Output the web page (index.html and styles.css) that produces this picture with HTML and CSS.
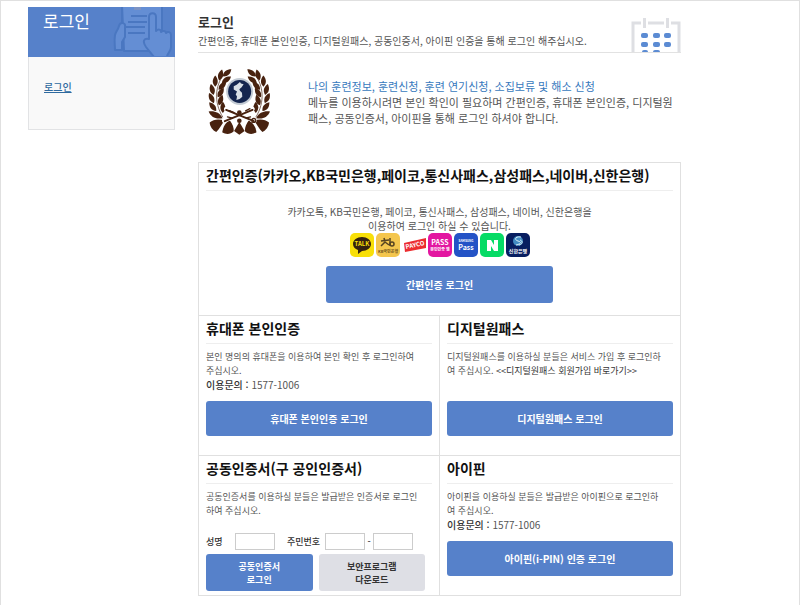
FILE: index.html
```html
<!DOCTYPE html>
<html lang="ko">
<head>
	<meta charset="utf-8">
	<title>로그인</title>
	<link rel="stylesheet" href="styles.css">
</head>
<body>
	<div class="page">
		<aside class="side">
			<div class="side-head">
				<h2>로그인</h2>
				<svg class="side-pic" viewBox="0 0 60 49" aria-hidden="true">
					<g fill="#648ed4" stroke="#4a77c1" stroke-width="2" stroke-linejoin="round">
						<path d="M10 -2v20M10 -2H50V44H12z"/>
						<path d="M3 43c0-5-1-9 0-15 1-4 3-5 4-9 1-4 7-4 6 1v10l-3 5v8z"/>
						<path d="M22 -2h7v5h-7z" fill="#7c93c4" stroke="none"/>
						<path d="M19 9h16M16 15h19M13 20h20M16 26h17" fill="none"/>
						<path d="M42 50l-8-10c-4-6-2-9 3-8V10c0-5 7-5 7 0v14c2-2 5-2 5 1 2-2 5-1 5 1 2-2 5-1 5 2v12c0 5-4 6-4 10z"/>
					</g>
				</svg>
			</div>
			<nav class="side-body"><a href="#">로그인</a></nav>
		</aside>

		<main>
			<header class="title">
				<div>
					<h1>로그인</h1>
					<p>간편인증, 휴대폰 본인인증, 디지털원패스, 공동인증서, 아이핀 인증을 통해 로그인 해주십시오.</p>
				</div>
				<svg class="calendar" viewBox="0 0 50 35" aria-hidden="true">
					<path d="M2 36V6H48V36" fill="none" stroke="#dedfe3" stroke-width="3"/>
					<path d="M10 0h7v11h-7zM33 0h7v11h-7z" fill="#fff"/>
					<path d="M12 1h3v10h-3zM35 1h3v10h-3z" fill="#dedfe3"/>
					<g fill="#5b8bd3">
						<rect x="10" y="16" width="7" height="5" rx="2"/><rect x="22" y="16" width="7" height="5" rx="2"/><rect x="33" y="16" width="7" height="5" rx="2"/>
						<rect x="10" y="25" width="7" height="5" rx="2"/><rect x="22" y="25" width="7" height="5" rx="2"/><rect x="33" y="25" width="7" height="5" rx="2"/>
						<rect x="11" y="33" width="6" height="4" rx="2"/><rect x="22" y="33" width="7" height="4" rx="2"/>
					</g>
				</svg>
			</header>

			<section class="info">
				<svg class="emblem" viewBox="39 24 188 204" role="img" aria-label="예비군">
					<defs>
						<path id="leaf" d="M0 16C-11 5-9-7 0-18 9-7 11 5 0 16z"/>
						<g id="branch" fill="#48220f">
							<path d="M86 44C62 75 55 125 84 172" fill="none" stroke="#48220f" stroke-width="2"/>
							<use href="#leaf" transform="translate(96 38) rotate(50)"/>
							<use href="#leaf" transform="translate(77 45) rotate(15)"/>
							<use href="#leaf" transform="translate(94 59) rotate(55)"/>
							<use href="#leaf" transform="translate(61 64) rotate(0)"/>
							<use href="#leaf" transform="translate(82 77) rotate(43)"/>
							<use href="#leaf" transform="translate(52 89) rotate(-14)"/>
							<use href="#leaf" transform="translate(77 98) rotate(32)"/>
							<use href="#leaf" transform="translate(50 115) rotate(-25)"/>
							<use href="#leaf" transform="translate(77 121) rotate(18)"/>
							<use href="#leaf" transform="translate(54 141) rotate(-38)"/>
							<use href="#leaf" transform="translate(84 143) rotate(0)"/>
							<path d="M41 155c15-3 34 2 42 20-20 5-36-4-42-20z"/>
							<path d="M44 188c12-10 29-12 45-5-8 9-15 26-25 34-11-5-19-17-20-29z"/>
							<path d="M82 218c3-17 9-29 23-37 8 10 13 23 12 34-10 9-22 11-35 3z"/>
						</g>
					</defs>
					<use href="#branch"/>
					<use href="#branch" transform="translate(268 0) scale(-1 1)"/>
					<path d="M118 214l16-27 16 27-16 11z" fill="#48220f"/>
					<g fill="none" stroke-linecap="round">
						<path d="M88 183l86-36M180 183L94 147" stroke="#fff" stroke-width="13"/>
						<path d="M90 184l84-34M178 184L94 150" stroke="#48220f" stroke-width="6"/>
						<path d="M98 171l15 4M104 152l14 6M153 153l13-7M155 174l13-3" stroke="#48220f" stroke-width="4"/>
						<circle cx="178" cy="182" r="6" stroke="#48220f" stroke-width="4"/>
					</g>
					<circle cx="134" cy="158" r="7" fill="#48220f"/>
					<circle cx="134" cy="183" r="7" fill="#48220f"/>
					<circle cx="135" cy="94" r="41" fill="#c3cbd4"/>
					<circle cx="135" cy="94" r="35" fill="#14254f"/>
					<path d="M117 78l9-4 10-9 3 5 8 2-6 9-7 6 2 5 6 6 1 12-8 7-10 3 2-11-4-6 4-9-10-6z" fill="#d8dfe6"/>
				</svg>
				<p><em>나의 훈련정보, 훈련신청, 훈련 연기신청, 소집보류 및 해소 신청</em><br>
				메뉴를 이용하시려면 본인 확인이 필요하며 간편인증, 휴대폰 본인인증, 디지털원<br>패스, 공동인증서, 아이핀을 통해 로그인 하셔야 합니다.</p>
			</section>

			<div class="panel">
				<section class="card simple">
					<h3>간편인증(카카오,KB국민은행,페이코,통신사패스,삼성패스,네이버,신한은행)</h3>
					<p>카카오톡, KB국민은행, 페이코, 통신사패스, 삼성패스, 네이버, 신한은행을<br>이용하여 로그인 하실 수 있습니다.</p>
					<div class="logos">
						<svg viewBox="0 0 24 24">
							<rect width="24" height="24" rx="5" fill="#f8df08"/>
							<path d="M12 4c5 0 9 3 9 7s-4 7-9 7l-4 3 0-4c-3-1-5-3-5-6 0-4 4-7 9-7z" fill="#35220f"/>
							<text x="12" y="13" font-size="6" fill="#f8df08">TALK</text>
						</svg>
						<svg viewBox="0 0 24 24">
							<rect width="24" height="24" rx="5" fill="#f4c64e"/>
							<path d="M5 8l8-1M8 5l1 4-4 4M9 9l4 3M14 5v8" fill="none" stroke="#564322" stroke-width="1.5"/>
							<circle cx="16" cy="11" r="2" fill="none" stroke="#564322" stroke-width="1.5"/>
							<text x="12" y="20" font-size="4" fill="#705522">KB국민은행</text>
						</svg>
						<svg viewBox="0 0 24 24">
							<path d="M2 10L24 5V15L3 19z" fill="#ec2c2f"/>
							<text x="13" y="14" font-size="6" fill="#fff" transform="rotate(-12 13 12)">PAYCO</text>
						</svg>
						<svg viewBox="0 0 24 24">
							<rect width="24" height="24" rx="5" fill="#e316a0"/>
							<text x="12" y="12" font-size="7" fill="#fff">PASS</text>
							<text x="12" y="18" font-size="4" fill="#fff">본인인증 앱</text>
						</svg>
						<svg viewBox="0 0 24 24">
							<rect width="24" height="24" rx="5" fill="#2453c6"/>
							<text x="12" y="9" font-size="3" fill="#fff">SAMSUNG</text>
							<text x="12" y="17" font-size="7" fill="#fff">Pass</text>
						</svg>
						<svg viewBox="0 0 24 24">
							<rect width="24" height="24" rx="5" fill="#06db65"/>
							<path d="M7 18V7h4l3 5V7h4v11h-4l-3-5v5z" fill="#fff"/>
						</svg>
						<svg viewBox="0 0 24 24">
							<rect width="24" height="24" rx="5" fill="#081e60"/>
							<circle cx="12" cy="8" r="5" fill="#438cc3"/>
							<path d="M15 4c-6-1-7 3-3 4s3 3-2 4M13 12c4-1 4-4 1-5" fill="none" stroke="#d9edf5"/>
							<text x="12" y="20" font-size="5" fill="#fff">신한은행</text>
						</svg>
					</div>
					<button type="button" class="btn">간편인증 로그인</button>
				</section>

				<section class="card">
					<h3>휴대폰 본인인증</h3>
					<p>본인 명의의 휴대폰을 이용하여 본인 확인 후 로그인하여<br>주십시오.<br><span class="tel"><b>이용문의 :</b> 1577-1006</span></p>
					<button type="button" class="btn">휴대폰 본인인증 로그인</button>
				</section>

				<section class="card">
					<h3>디지털원패스</h3>
					<p>디지털원패스를 이용하실 분들은 서비스 가입 후 로그인하<br>여 주십시오. <a href="#">&lt;&lt;디지털원패스 회원가입 바로가기&gt;&gt;</a></p>
					<button type="button" class="btn">디지털원패스 로그인</button>
				</section>

				<section class="card">
					<h3>공동인증서(구 공인인증서)</h3>
					<p>공동인증서를 이용하실 분들은 발급받은 인증서로 로그인<br>하여 주십시오.</p>
					<form class="cert">
						<div class="fields">
							<label class="name" for="name">성명</label>
							<input type="text" id="name">
							<label class="jumin" for="jumin1">주민번호</label>
							<input type="text" id="jumin1">
							<span>-</span>
							<input type="password" id="jumin2" aria-label="주민번호 뒷자리">
						</div>
						<div class="btns">
							<button type="button" class="btn">공동인증서<br>로그인</button>
							<button type="button" class="btn gray">보안프로그램<br>다운로드</button>
						</div>
					</form>
				</section>

				<section class="card">
					<h3>아이핀</h3>
					<p>아이핀을 이용하실 분들은 발급받은 아이핀으로 로그인하<br>여 주십시오.<br><span class="tel"><b>이용문의 :</b> 1577-1006</span></p>
					<button type="button" class="btn">아이핀(i-PIN) 인증 로그인</button>
				</section>
			</div>
		</main>
	</div>
</body>
</html>
```
FILE: styles.css
```css
* {
	box-sizing: border-box;
}

html {
	height: 100%;
}

body {
	margin: 0;
	min-height: 100%;
	border: 1px solid #e0e0e0;
	background: #fff;
	color: #555;
	font-family: "Noto Sans CJK KR", sans-serif;
	font-size: 10px;
	line-height: 14px;
}

h1, h2, h3, p {
	margin: 0;
}

.page {
	display: grid;
	grid-template-columns: 147px 1fr;
	gap: 23px;
	align-items: start;
	padding: 6px 118px 9px 27px;
}

/* left menu */
.side-head {
	display: flex;
	justify-content: space-between;
	height: 50px;
	padding: 0 3px 0 15px;
	background: #5681ca;
	color: #fff;
}

.side-head h2 {
	padding-top: 2px;
	font-size: 17px;
	font-weight: 400;
	line-height: 24px;
}

.side-pic {
	width: 60px;
	height: 49px;
}

.side-body {
	height: 73px;
	padding: 23px 15px;
	border: 1px solid #e2e3e5;
	border-top: 0;
	background: #f9f9f9;
}

.side-body a {
	color: #2f6a9f;
	font-weight: 500;
}

/* page title */
.title {
	display: flex;
	justify-content: space-between;
	align-items: flex-end;
	height: 46px;
	border-bottom: 1px solid #e2e2e2;
	white-space: nowrap;
}

.title h1 {
	padding-bottom: 2px;
	color: #333;
	font-size: 13px;
	font-weight: 700;
	line-height: 20px;
}

.title p {
	padding-bottom: 4px;
}

.calendar {
	width: 50px;
	height: 35px;
}

.info {
	display: flex;
	align-items: center;
	gap: 38px;
	padding: 15px 0 26px 10px;
	font-size: 11px;
	line-height: 16px;
	white-space: nowrap;
}

.info em {
	color: #3779bd;
	font-style: normal;
}

.emblem {
	width: 62px;
	height: 68px;
}

/* login methods */
.panel {
	display: grid;
	grid-template-columns: 1fr 1fr;
	gap: 1px;
	border: 1px solid #e0e0e0;
	background: #e0e0e0;
}

.card {
	display: flex;
	flex-direction: column;
	min-width: 0;
	min-height: 139px;
	padding: 0 7px 4px;
	background: #fff;
}

.card h3 {
	padding: 2px 0 5px;
	border-bottom: 1px solid #eee;
	color: #111;
	font-size: 14px;
	font-weight: 700;
	line-height: 20px;
	white-space: nowrap;
}

.card p {
	padding-top: 6px;
	font-size: 9px;
	white-space: nowrap;
}

.card b {
	color: #333;
	font-weight: 500;
}

.card p a {
	color: #333;
	text-decoration: none;
}

.card .tel {
	font-size: 10px;
}

.card > .btn {
	margin-top: auto;
	margin-bottom: 15px;
}

.btn {
	height: 35px;
	padding: 0;
	border: 0;
	border-radius: 3px;
	background: #5681ca;
	color: #fff;
	font-family: inherit;
	font-size: 10px;
	font-weight: 700;
	line-height: 13px;
	cursor: pointer;
}

.simple {
	grid-column: 1 / 3;
	align-items: center;
	min-height: 152px;
}

.simple h3 {
	align-self: stretch;
}

.simple p {
	padding-top: 14px;
	font-size: 10px;
	text-align: center;
}

.logos {
	display: flex;
	gap: 2px;
}

.logos svg {
	width: 24px;
	height: 24px;
}

.logos text {
	font-family: "Noto Sans CJK KR", sans-serif;
	font-weight: 700;
	text-anchor: middle;
}

.simple > .btn {
	width: 227px;
	height: 37px;
	margin-bottom: 8px;
}

/* certificate form */
.cert {
	margin-top: auto;
}

.fields {
	display: flex;
	align-items: center;
	color: #333;
	font-size: 9px;
	font-weight: 500;
}

.fields label {
	flex: none;
}

.fields .name {
	width: 29px;
}

.fields .jumin {
	margin-left: 12px;
	width: 38px;
}

.fields input {
	width: 40px;
	height: 17px;
	padding: 0 2px;
	border: 1px solid #ccc;
}

.fields span {
	width: 8px;
	text-align: center;
}

.btns {
	display: grid;
	grid-template-columns: 1fr 1fr;
	gap: 6px;
	margin-top: 4px;
	padding-right: 7px;
}

.btns .btn {
	height: 37px;
	font-size: 9px;
}

.btns .gray {
	background: #dedfe5;
	color: #333;
}
```
